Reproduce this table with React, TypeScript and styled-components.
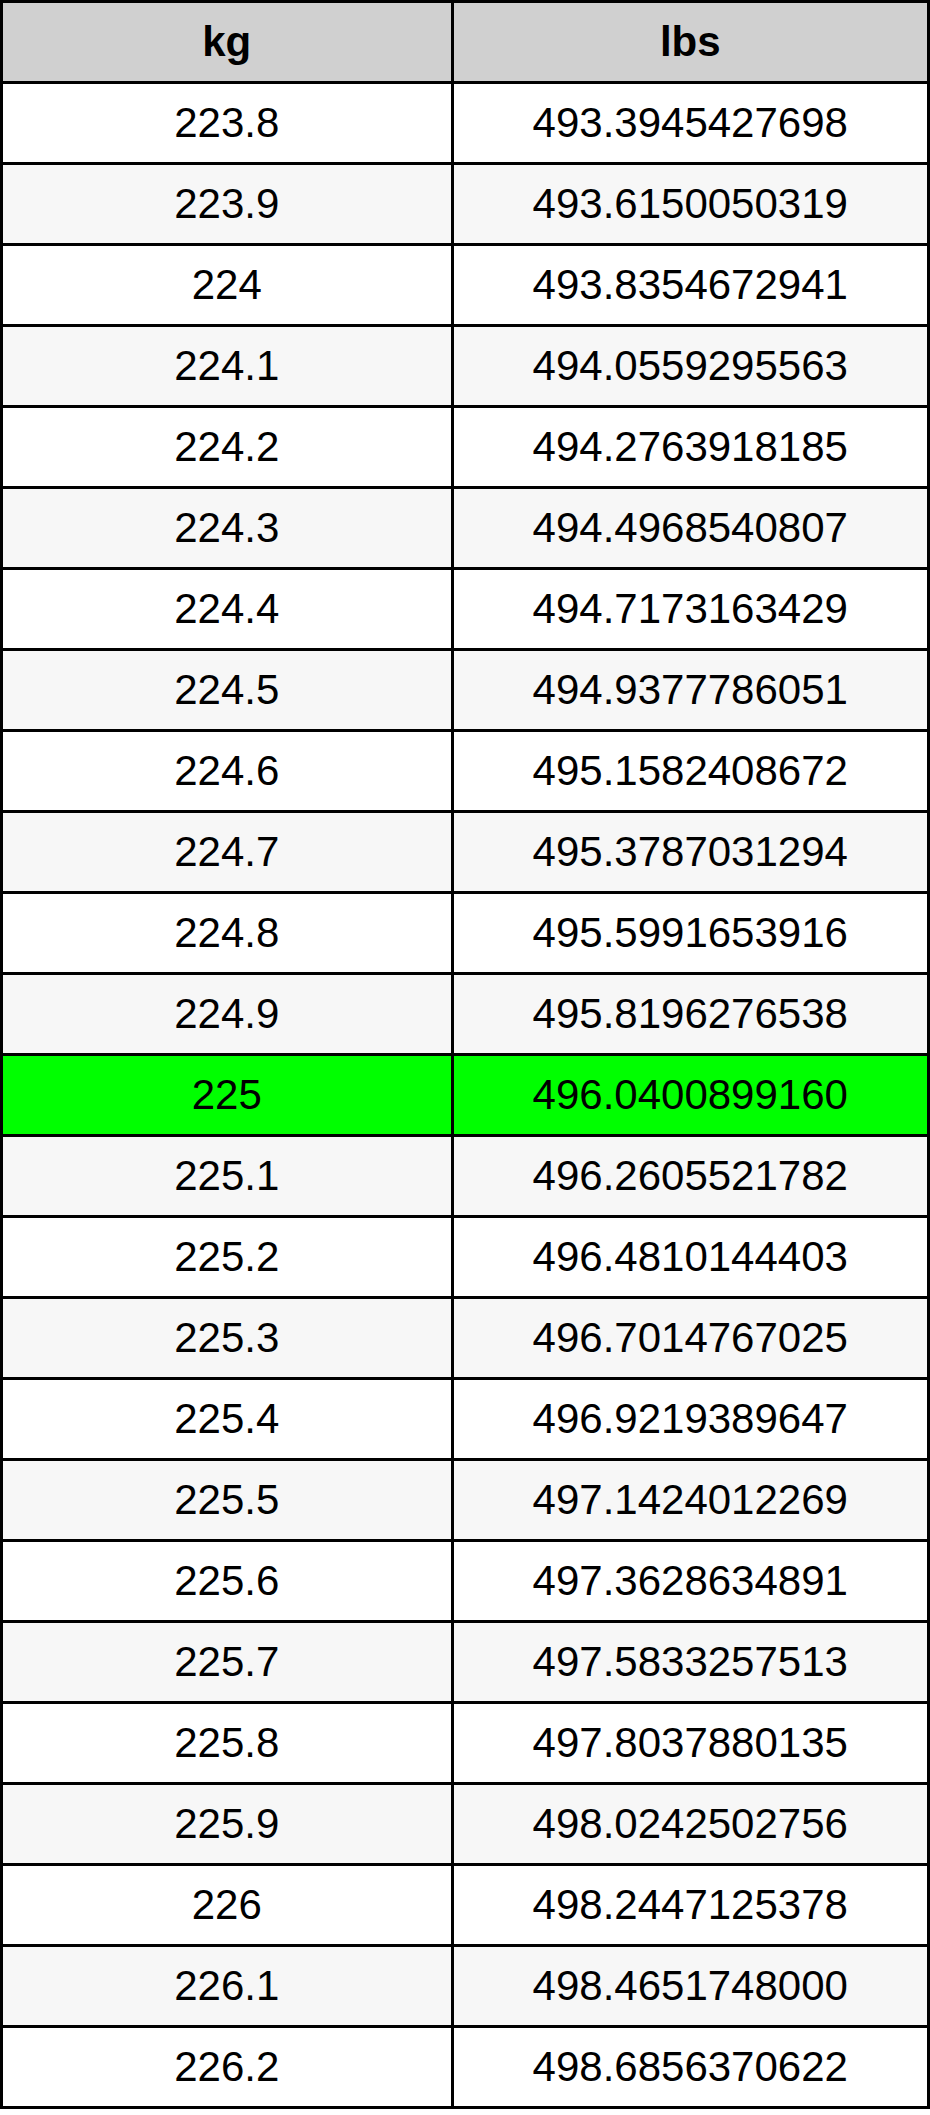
import React from "react";
import styled, { createGlobalStyle } from "styled-components";

const Global = createGlobalStyle`
  html, body { margin: 0; padding: 0; background: #ffffff; }
  body { font-family: "Liberation Sans", Arial, Helvetica, sans-serif; }
`;

const Table = styled.table`
  width: 930px;
  border-collapse: collapse;
  table-layout: fixed;
  border: 3px solid #000;
  font-family: "Liberation Sans", Arial, Helvetica, sans-serif;
  font-size: 42px;
  color: #000;
`;

const HeadCell = styled.th`
  height: 78px;
  padding: 0;
  border: 3px solid #000;
  background: #d0d0d0;
  font-weight: bold;
  text-align: center;
  vertical-align: middle;
`;

const Row = styled.tr<{ $shade: "white" | "gray" | "green" }>`
  background: ${(p) =>
    p.$shade === "green" ? "#00ff00" : p.$shade === "gray" ? "#f7f7f7" : "#ffffff"};
`;

const Cell = styled.td`
  height: 78px;
  padding: 0;
  border: 3px solid #000;
  text-align: center;
  vertical-align: middle;
`;

const rows: [string, string][] = [
  ["223.8", "493.3945427698"],
  ["223.9", "493.6150050319"],
  ["224", "493.8354672941"],
  ["224.1", "494.0559295563"],
  ["224.2", "494.2763918185"],
  ["224.3", "494.4968540807"],
  ["224.4", "494.7173163429"],
  ["224.5", "494.9377786051"],
  ["224.6", "495.1582408672"],
  ["224.7", "495.3787031294"],
  ["224.8", "495.5991653916"],
  ["224.9", "495.8196276538"],
  ["225", "496.0400899160"],
  ["225.1", "496.2605521782"],
  ["225.2", "496.4810144403"],
  ["225.3", "496.7014767025"],
  ["225.4", "496.9219389647"],
  ["225.5", "497.1424012269"],
  ["225.6", "497.3628634891"],
  ["225.7", "497.5833257513"],
  ["225.8", "497.8037880135"],
  ["225.9", "498.0242502756"],
  ["226", "498.2447125378"],
  ["226.1", "498.4651748000"],
  ["226.2", "498.6856370622"],
];

export default function App() {
  return (
    <>
      <Global />
      <Table>
        <colgroup>
          <col style={{ width: "450.5px" }} />
          <col />
        </colgroup>
        <thead>
          <tr>
            <HeadCell>kg</HeadCell>
            <HeadCell>lbs</HeadCell>
          </tr>
        </thead>
        <tbody>
          {rows.map(([kg, lbs], i) => (
            <Row
              key={kg}
              $shade={kg === "225" ? "green" : i % 2 === 1 ? "gray" : "white"}
            >
              <Cell>{kg}</Cell>
              <Cell>{lbs}</Cell>
            </Row>
          ))}
        </tbody>
      </Table>
    </>
  );
}
